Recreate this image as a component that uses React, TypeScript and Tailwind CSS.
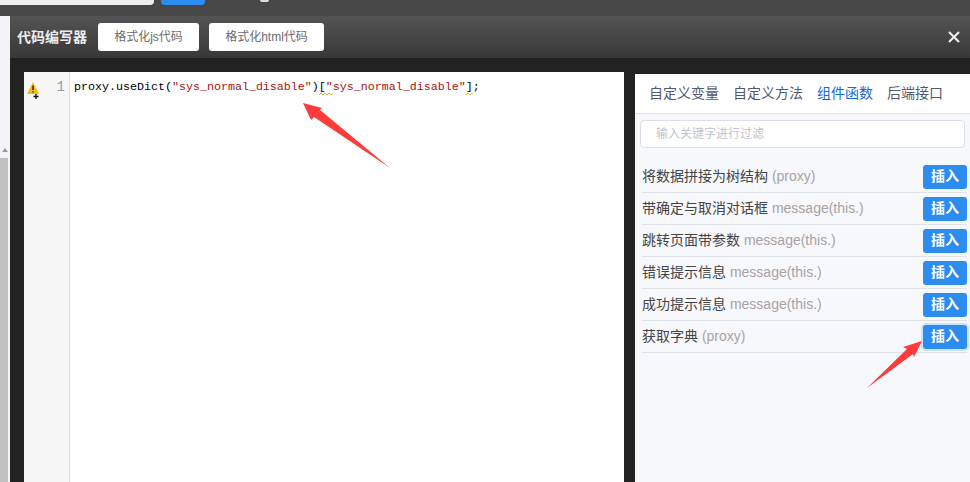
const funcs = [
  { name: "将数据拼接为树结构", hint: "(proxy)" },
  { name: "带确定与取消对话框", hint: "message(this.)" },
  { name: "跳转页面带参数", hint: "message(this.)" },
  { name: "错误提示信息", hint: "message(this.)" },
  { name: "成功提示信息", hint: "message(this.)" },
  { name: "获取字典", hint: "(proxy)" },
];

const tabs = ["自定义变量", "自定义方法", "组件函数", "后端接口"];

const Squiggle = ({ width }: { width: number }) => (
  <svg className="absolute left-0 top-[12px]" width={width} height="4" viewBox={`0 0 ${width} 4`}>
    <path
      d={Array.from({ length: Math.ceil(width / 2) + 1 }, (_, i) => `${i === 0 ? "M" : "L"}${i * 2} ${i % 2 ? 1 : 3}`).join(" ")}
      fill="none"
      stroke="#e0b52e"
      strokeWidth="1"
    />
  </svg>
);

export default function App() {
  return (
    <div className="relative h-[482px] w-[970px] overflow-hidden bg-[#222222] font-['Liberation_Sans','Noto_Sans_CJK_SC',sans-serif]">
      {/* page behind the dialog */}
      <div className="flex h-[16px] items-start bg-[#474747]">
        <div className="h-[5px] w-[154px] rounded-br bg-[#eeeeee]" />
        <div className="ml-[7px] h-[5px] w-[44px] rounded-b bg-[#2d8cf0]" />
        <div className="ml-[55px] h-[2px] w-[9px] rounded-b-full bg-[#dddddd]" />
      </div>

      <div className="flex h-[466px]">
        <div className="flex w-[10px] flex-col bg-[#f3f4f8]">
          <div className="flex h-[136px] items-end justify-center pr-[1px]">
            <svg width="6" height="4" viewBox="0 0 6 4">
              <path d="M3 0 L6 4 H0 Z" fill="#9a9a9a" />
            </svg>
          </div>
          <div className="mt-[6px] mr-[2px] flex-1 bg-[#c0c0c0]" />
        </div>

        <div className="flex min-w-0 flex-1 flex-col">
          <div className="flex h-[42px] items-center bg-gradient-to-b from-[#545454] to-[#383838] pl-[7px] pr-[10px]">
            <span className="text-[14px] font-bold text-[#eeeeee]">代码编写器</span>
            <button className="ml-[11px] h-[28px] w-[101px] rounded-[3px] bg-white text-[12px] text-[#6b6b6b]">格式化js代码</button>
            <button className="ml-[10px] h-[28px] w-[115px] rounded-[3px] bg-white text-[12px] text-[#6b6b6b]">格式化html代码</button>
            <svg className="ml-auto" width="12" height="12" viewBox="0 0 12 12">
              <path d="M1 1 L11 11 M11 1 L1 11" stroke="#f2f2f2" strokeWidth="2" />
            </svg>
          </div>

          <div className="flex flex-1 pl-[14px] pt-[14px]">
            {/* code editor */}
            <div className="flex w-[600px] bg-white">
              <div className="relative flex w-[46px] justify-end border-r border-[#dddddd] bg-[#f7f7f7] pr-[4px] pt-[7px] font-['Liberation_Mono',monospace] text-[14px] leading-[17px] text-[#999999]">
                1
                <svg className="absolute left-[3px] top-[10px]" width="14" height="20" viewBox="0 0 14 20">
                  <path d="M6 0 L12 12 H0 Z" fill="#fdb90f" />
                  <path d="M6 3.5 V8 M6 9.2 V10.6" stroke="#222222" strokeWidth="1.4" />
                  <path d="M9 12 V17 M6.5 14.5 H11.5" stroke="#111111" strokeWidth="1.4" />
                </svg>
              </div>
              <div className="pl-[4px] pt-[7px] font-['Liberation_Mono',monospace] text-[11.67px] leading-[17px] whitespace-pre text-black">
                proxy.useDict(<span className="text-[#a31515]">"sys_normal_disable"</span>)
                <span className="relative">
                  [<span className="text-[#a31515]">"</span>
                  <Squiggle width={14} />
                </span>
                <span className="text-[#a31515]">sys_normal_disable"</span>
                <span className="relative">
                  ]
                  <Squiggle width={7} />
                </span>
                ;
              </div>
            </div>

            {/* right panel */}
            <div className="ml-[11px] mt-[2px] flex flex-1 flex-col bg-[#f7f8fb]">
              <div className="flex h-[40px] items-center gap-[14px] border-b border-[#e0e3e9] bg-white pl-[14px] text-[14px] text-[#515a6e]">
                {tabs.map((tab) => (
                  <span key={tab} className={tab === "组件函数" ? "text-[#1668dc]" : ""}>
                    {tab}
                  </span>
                ))}
              </div>
              <div className="px-[5px] pt-[6px]">
                <div className="flex h-[28px] items-center rounded-[4px] border border-[#dcdfe6] bg-white pl-[15px] text-[12px] text-[#c0c4cc]">
                  输入关键字进行过滤
                </div>
              </div>
              <div className="pl-[7px] pr-[3px] pt-[13px]">
                {funcs.map((f, i) => (
                  <div key={f.name} className="flex h-[32px] items-center justify-between border-b border-[#dfe2e8] text-[14px] text-[#444444]">
                    <span>
                      {f.name} <span className="text-[#a8a2a2]">{f.hint}</span>
                    </span>
                    <button className={`h-[24px] w-[44px] rounded-[3px] bg-[#2d8cf0] text-[14px] font-bold text-white ${i === 5 ? "ring-2 ring-[#2d8cf0]/20" : ""}`}>
                      插入
                    </button>
                  </div>
                ))}
              </div>
            </div>
          </div>
        </div>
      </div>

      {/* annotation arrows */}
      <svg className="absolute left-[303px] top-[103px]" width="88" height="66" viewBox="0 0 88 66">
        <polygon points="0,0 19,5 17,7 87,65 11,14 8,17" fill="#ff3b3b" />
      </svg>
      <svg className="absolute left-[866px] top-[340px]" width="57" height="49" viewBox="0 0 57 49">
        <polygon points="56,1 48,17 47,14 1,48 41,9 37,7" fill="#ff3b3b" />
      </svg>
    </div>
  );
}
